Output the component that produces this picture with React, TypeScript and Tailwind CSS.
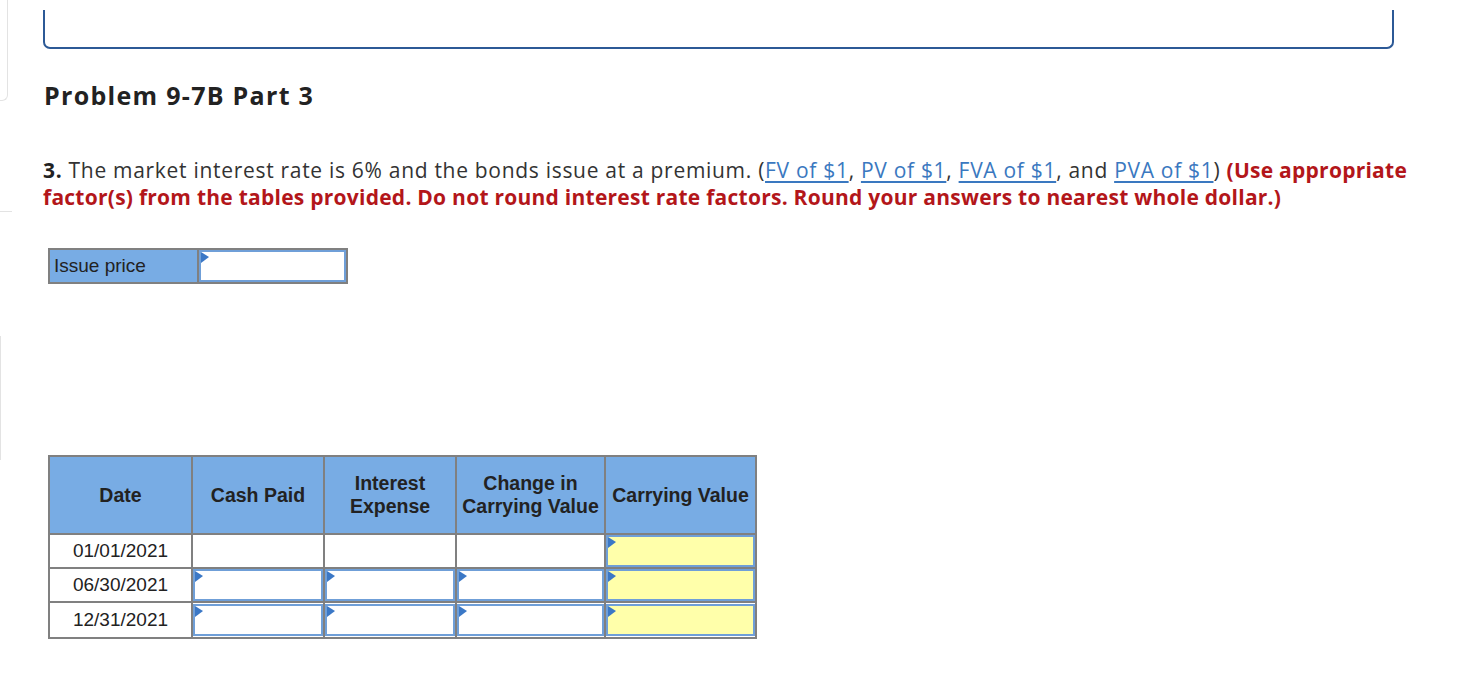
import React from "react";

const sans = "font-['Open_Sans','Lato',sans-serif]";
const arial = "font-['Liberation_Sans',Arial,sans-serif]";

function Marker() {
  return (
    <svg className="absolute left-0 top-0" width="9" height="12" viewBox="0 0 9 12">
      <polygon points="0,0 8,5 0,11" fill="#3b78c6" />
    </svg>
  );
}

function InputBox({ yellow }: { yellow?: boolean }) {
  return (
    <div
      className={`relative h-full w-full border-2 border-[#6f9fd8] ${yellow ? "bg-[#ffffaa]" : "bg-white"}`}
    >
      <Marker />
    </div>
  );
}

const rows = [
  { date: "01/01/2021", inputs: false },
  { date: "06/30/2021", inputs: true },
  { date: "12/31/2021", inputs: true },
];

export default function App() {
  return (
    <div className={`relative h-[686px] w-[1462px] overflow-hidden bg-white text-[#222] ${sans}`}>
      {/* left gutter bits */}
      <div className="absolute left-0 top-0 h-[101px] w-[8px] rounded-br-[6px] border-b border-r border-[#e3e3e3]" />
      <div className="absolute left-0 top-[211px] h-px w-[12px] bg-[#e3e3e3]" />
      <div className="absolute left-0 top-[336px] h-[124px] w-px bg-[#e3e3e3]" />

      <div className="ml-[43px] mt-[10px] h-[39px] w-[1351px] rounded-b-[7px] border-x-2 border-b-2 border-[#2c5996]" />

      <h2 className="ml-[44px] mt-[31px] text-[25px] font-bold leading-[30px] tracking-[1.3px] text-[#222]">
        Problem 9-7B Part 3
      </h2>

      <p className="ml-[43px] mt-[47px] w-[1380px] text-[21px] leading-[27px] tracking-[0.7px] text-[#333]">
        <b className="text-[#222]">3.</b> The market interest rate is 6% and the bonds issue at a premium. (
        <span className="text-[#3a78c0] underline underline-offset-[3px]">FV of $1</span>,{" "}
        <span className="text-[#3a78c0] underline underline-offset-[3px]">PV of $1</span>,{" "}
        <span className="text-[#3a78c0] underline underline-offset-[3px]">FVA of $1</span>, and{" "}
        <span className="text-[#3a78c0] underline underline-offset-[3px]">PVA of $1</span>){" "}
        <b className="tracking-[0.25px] text-[#b3161a]">
          (Use appropriate factor(s) from the tables provided. Do not round interest rate factors. Round your
          answers to nearest whole dollar.)
        </b>
      </p>

      <div className={`ml-[48px] mt-[37px] flex h-[36px] w-[300px] border-2 border-[#808080] ${arial}`}>
        <div className="flex w-[149px] items-center border-r-2 border-[#808080] bg-[#78ace4] pl-[4px] text-[19px] text-[#222]">
          Issue price
        </div>
        <div className="flex-1">
          <InputBox />
        </div>
      </div>

      <table className={`ml-[48px] mt-[171px] border-collapse ${arial}`}>
        <thead>
          <tr className="h-[78px] bg-[#78ace4] text-[19.5px] font-bold leading-[23px] text-[#222]">
            <th className="w-[143px] border-2 border-[#808080]">Date</th>
            <th className="w-[132px] border-2 border-[#808080]">Cash Paid</th>
            <th className="w-[132px] border-2 border-[#808080]">
              Interest
              <br />
              Expense
            </th>
            <th className="w-[149px] border-2 border-[#808080]">
              Change in
              <br />
              Carrying Value
            </th>
            <th className="w-[151px] border-2 border-[#808080]">Carrying Value</th>
          </tr>
        </thead>
        <tbody>
          {rows.map((r, i) => (
            <tr key={r.date} className={i == 2 ? "h-[36px]" : "h-[34px]"}>
              <td className="border-2 border-[#808080] text-center text-[19px] text-[#222]">{r.date}</td>
              {[0, 1, 2].map((c) => (
                <td key={c} className="border-2 border-[#808080] p-0">
                  {r.inputs && <div className="h-[32px]"><InputBox /></div>}
                </td>
              ))}
              <td className="border-2 border-[#808080] p-0">
                <div className="h-[32px]">
                  <InputBox yellow />
                </div>
              </td>
            </tr>
          ))}
        </tbody>
      </table>
    </div>
  );
}
